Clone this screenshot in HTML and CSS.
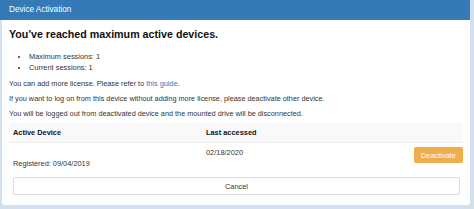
FILE: index.html
```html
<!DOCTYPE html>
<html lang="en">
<head>
    <meta charset="UTF-8">
    <title>Device Activation</title>
    <link rel="stylesheet" href="styles.css">
</head>
<body>
    <div class="modal">
        <div class="modal-header">Device Activation</div>
        <div class="modal-body">
            <h1>You've reached maximum active devices.</h1>
            <ul class="sessions">
                <li>Maximum sessions: 1</li>
                <li>Current sessions: 1</li>
            </ul>
            <p>You can add more license. Please refer to <a href="#">this guide</a>.</p>
            <p>If you want to log on from this device without adding more license, please deactivate other device.</p>
            <p>You will be logged out from deactivated device and the mounted drive will be disconnected.</p>
            <table class="devices">
                <thead>
                    <tr>
                        <th class="col-device">Active Device</th>
                        <th class="col-date">Last accessed</th>
                        <th></th>
                    </tr>
                </thead>
                <tbody>
                    <tr>
                        <td class="col-device">
                            <div class="device-name">&nbsp;</div>
                            <div>Registered: 09/04/2019</div>
                        </td>
                        <td class="col-date">02/18/2020</td>
                        <td class="col-action"><button class="btn btn-warning">Deactivate</button></td>
                    </tr>
                </tbody>
            </table>
            <button class="btn btn-cancel">Cancel</button>
        </div>
    </div>
</body>
</html>
```

FILE: styles.css
```css
body {
    margin: 0;
    background: #d3e1ee;
    font-family: "Liberation Sans", Arial, sans-serif;
    color: #333;
    font-size: 8px;
}
.modal {
    width: 470px;
}
.modal-header {
    background-color: #337ab7;
    color: #fff;
    height: 20px;
    line-height: 20px;
    padding-left: 9px;
    font-size: 8.2px;
}
.modal-body {
    background-color: #fff;
    margin-left: 2px;
    padding: 0 7px 0 7px;
    height: 185px;
    border-bottom-left-radius: 3px;
    border-bottom-right-radius: 3px;
    box-sizing: border-box;
    overflow: hidden;
}
h1 {
    margin: 0;
    padding-top: 7px;
    font-size: 10.7px;
    line-height: 14px;
    color: #111;
}
.sessions {
    margin: 10px 0 5px 0;
    padding-left: 20px;
    line-height: 11px;
    font-size: 7.4px;
}
p {
    margin: 0 0 4px 0;
    line-height: 11px;
    font-size: 7.3px;
}
a {
    color: #337ab7;
    text-decoration: none;
}
.devices {
    width: 454px;
    border-collapse: collapse;
    margin-top: 3px;
    font-size: 7.4px;
}
.devices th {
    background-color: #f9f9f9;
    text-align: left;
    height: 19px;
    padding: 0 4px;
    font-weight: bold;
    color: #111;
}
.devices td {
    padding: 4px 4px 2px 4px;
    vertical-align: top;
    line-height: 11px;
    border-top: 1px solid #f2f2f2;
}
.col-device {
    width: 185px;
}
.devices .col-action {
    text-align: right;
    padding-right: 0;
}
.btn {
    font-family: "Liberation Sans", Arial, sans-serif;
    font-size: 7.4px;
    border-radius: 2px;
    cursor: pointer;
}
.btn-warning {
    background-color: #f0ad4e;
    color: #fff;
    border: none;
    height: 16px;
    width: 49px;
    padding: 0;
}
.btn-cancel {
    display: block;
    width: 447px;
    height: 18px;
    margin: 6px 0 0 4px;
    background: #fff;
    color: #333;
    border: 1px solid #ddd;
}
```
